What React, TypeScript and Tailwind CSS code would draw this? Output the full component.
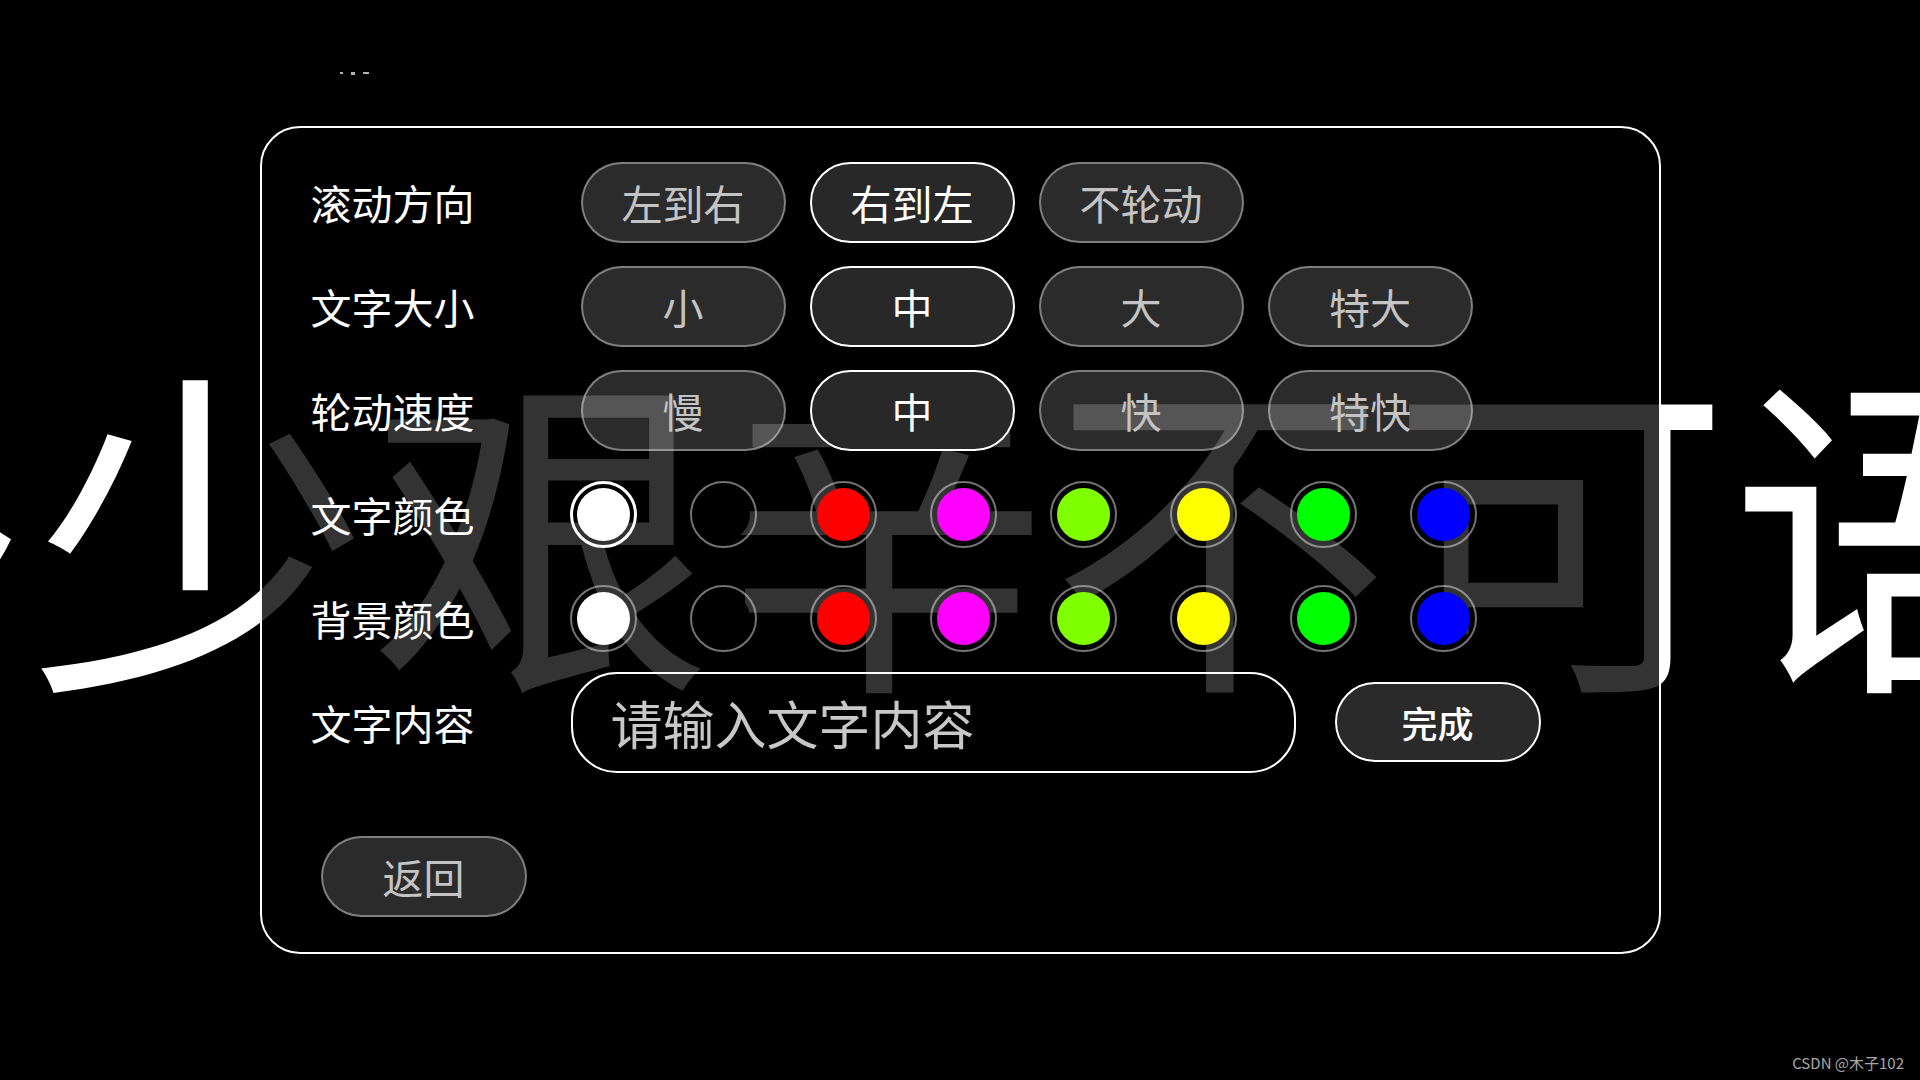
import React from 'react'

const cjk = "font-['Noto_Sans_CJK_SC','Noto_Sans',sans-serif]"

const swatches = [
  'bg-white',
  'bg-black',
  'bg-[#ff0000]',
  'bg-[#ff00ff]',
  'bg-[#7fff00]',
  'bg-[#ffff00]',
  'bg-[#00ff00]',
  'bg-[#0000ff]',
]

function Pill({ label, active }: { label: string; active?: boolean }) {
  return (
    <div
      className={
        active
          ? 'flex h-[81px] w-[205px] items-center justify-center rounded-full border-2 border-white bg-[#282828] text-[41px] leading-none text-white'
          : 'flex h-[81px] w-[205px] items-center justify-center rounded-full border-2 border-white/40 bg-white/[0.17] text-[41px] leading-none text-[#c4c4c4]'
      }
    >
      {label}
    </div>
  )
}

function Swatch({ fill, active }: { fill: string; active?: boolean }) {
  return (
    <div
      className={
        active
          ? 'flex h-[67px] w-[67px] items-center justify-center rounded-full border-[3px] border-white'
          : 'flex h-[67px] w-[67px] items-center justify-center rounded-full border-2 border-white/45'
      }
    >
      <div className={`h-[53px] w-[53px] rounded-full ${fill}`} />
    </div>
  )
}

function Row({ label, children }: { label: string; children: React.ReactNode }) {
  return (
    <div className="flex h-[104px] items-center">
      <div className="w-[258px] shrink-0 text-[41px] leading-none text-white">{label}</div>
      {children}
    </div>
  )
}

export default function App() {
  return (
    <div className={`relative flex h-screen w-full items-center justify-center overflow-hidden bg-black ${cjk}`}>
      {/* scrolling text behind the settings panel */}
      <div className="absolute left-[-310px] top-[348px] whitespace-nowrap text-[340px] leading-none text-white">
        多少艰辛不可语
      </div>

      <div className="absolute left-[340px] top-[72px] flex gap-[8px]">
        <div className="h-[2px] w-[3px] bg-white/70" />
        <div className="h-[3px] w-[4px] bg-white/70" />
        <div className="h-[2px] w-[6px] bg-white/70" />
      </div>

      <div className="relative z-10 flex h-[828px] w-[1401px] flex-col rounded-[40px] border-2 border-white bg-black/80 pl-[49px] pt-[22px]">
        <Row label="滚动方向">
          <div className="ml-[12px] flex gap-[24px]">
            <Pill label="左到右" />
            <Pill label="右到左" active />
            <Pill label="不轮动" />
          </div>
        </Row>
        <Row label="文字大小">
          <div className="ml-[12px] flex gap-[24px]">
            <Pill label="小" />
            <Pill label="中" active />
            <Pill label="大" />
            <Pill label="特大" />
          </div>
        </Row>
        <Row label="轮动速度">
          <div className="ml-[12px] flex gap-[24px]">
            <Pill label="慢" />
            <Pill label="中" active />
            <Pill label="快" />
            <Pill label="特快" />
          </div>
        </Row>
        <Row label="文字颜色">
          <div className="ml-[1px] flex gap-[53px]">
            {swatches.map((s, i) => (
              <Swatch key={s} fill={s} active={i === 0} />
            ))}
          </div>
        </Row>
        <Row label="背景颜色">
          <div className="ml-[1px] flex gap-[53px]">
            {swatches.map((s) => (
              <Swatch key={s} fill={s} />
            ))}
          </div>
        </Row>
        <Row label="文字内容">
          <div className="ml-[2px] flex items-center">
            <input
              placeholder="请输入文字内容"
              className="h-[101px] w-[725px] rounded-[46px] border-2 border-white bg-transparent pl-[38px] text-[52px] text-white outline-none placeholder:text-[#c8c8c8]"
            />
            <div className="ml-[39px] flex h-[80px] w-[206px] items-center justify-center rounded-full border-2 border-white bg-[#2a2a2a] text-[36px] font-medium leading-none text-white">
              完成
            </div>
          </div>
        </Row>

        <div className="ml-[10px] mt-[62px] flex h-[81px] w-[206px] items-center justify-center rounded-full border-2 border-white/40 bg-white/[0.17] text-[41px] leading-none text-[#c4c4c4]">
          返回
        </div>
      </div>

      <div className="absolute bottom-[10px] right-[16px] text-[15px] leading-none text-[#a8a8a8]">
        CSDN @木子102
      </div>
    </div>
  )
}
